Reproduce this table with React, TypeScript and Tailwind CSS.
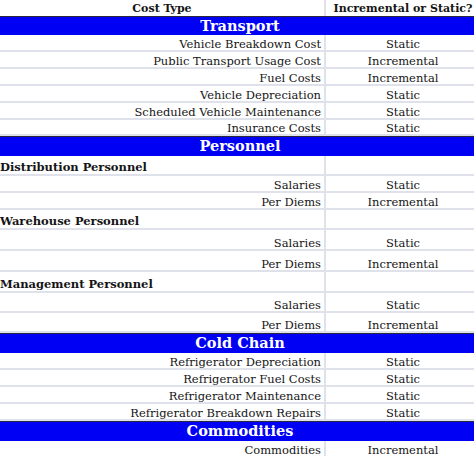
import React from "react";

type Row =
  | { k: "head"; h: number }
  | { k: "band"; label: string; h: number }
  | { k: "group"; label: string; h: number }
  | { k: "item"; left: string; right: string; h: number };

const rows: Row[] = [
  { k: "head", h: 16 },
  { k: "band", label: "Transport", h: 19 },
  { k: "item", left: "Vehicle Breakdown Cost", right: "Static", h: 17 },
  { k: "item", left: "Public Transport Usage Cost", right: "Incremental", h: 17 },
  { k: "item", left: "Fuel Costs", right: "Incremental", h: 17 },
  { k: "item", left: "Vehicle Depreciation", right: "Static", h: 17 },
  { k: "item", left: "Scheduled Vehicle Maintenance", right: "Static", h: 17 },
  { k: "item", left: "Insurance Costs", right: "Static", h: 16 },
  { k: "band", label: "Personnel", h: 20 },
  { k: "group", label: "Distribution Personnel", h: 20 },
  { k: "item", left: "Salaries", right: "Static", h: 17 },
  { k: "item", left: "Per Diems", right: "Incremental", h: 17 },
  { k: "group", label: "Warehouse Personnel", h: 20 },
  { k: "item", left: "Salaries", right: "Static", h: 21 },
  { k: "item", left: "Per Diems", right: "Incremental", h: 21 },
  { k: "group", label: "Management Personnel", h: 21 },
  { k: "item", left: "Salaries", right: "Static", h: 20 },
  { k: "item", left: "Per Diems", right: "Incremental", h: 20 },
  { k: "band", label: "Cold Chain", h: 20 },
  { k: "item", left: "Refrigerator Depreciation", right: "Static", h: 17 },
  { k: "item", left: "Refrigerator Fuel Costs", right: "Static", h: 17 },
  { k: "item", left: "Refrigerator Maintenance", right: "Static", h: 17 },
  { k: "item", left: "Refrigerator Breakdown Repairs", right: "Static", h: 17 },
  { k: "band", label: "Commodities", h: 20 },
  { k: "item", left: "Commodities", right: "Incremental", h: 17 },
];

export default function App() {
  return (
    <div
      className="w-[474px] h-[456px] overflow-hidden bg-white text-[#151515]"
      style={{ fontFamily: '"DejaVu Serif", serif' }}
    >
      <div className="w-[480px] flex flex-col">
        {rows.map((r, i) => {
          if (r.k === "head") {
            return (
              <div key={i} className="flex font-bold text-[11px] leading-none" style={{ height: r.h }}>
                <div className="w-[326px] flex items-center justify-center pt-[1px] border-r-2 border-[#dfe2ea]">
                  Cost Type
                </div>
                <div className="flex-1 flex items-center justify-center pt-[1px] whitespace-nowrap">
                  Incremental or Static?
                </div>
              </div>
            );
          }
          if (r.k === "band") {
            return (
              <div
                key={i}
                className="flex items-center justify-center bg-[#0000f5] text-white font-bold text-[14.5px] leading-none border-t border-[#2a2a3a]"
                style={{ height: r.h }}
              >
                {r.label}
              </div>
            );
          }
          if (r.k === "group") {
            return (
              <div key={i} className="flex text-[11.5px] leading-none border-b-2 border-[#dfe2ea]" style={{ height: r.h }}>
                <div className="w-[326px] flex items-end pb-[1px] font-bold whitespace-nowrap border-r-2 border-[#dfe2ea]">
                  {r.label}
                </div>
                <div className="flex-1" />
              </div>
            );
          }
          return (
            <div key={i} className="flex text-[11.5px] leading-none border-b-2 border-[#dfe2ea]" style={{ height: r.h }}>
              <div className="w-[326px] flex items-end justify-end pb-0 pr-[3px] whitespace-nowrap border-r-2 border-[#dfe2ea]">
                {r.left}
              </div>
              <div className="flex-1 flex items-end justify-center pb-0 whitespace-nowrap">{r.right}</div>
            </div>
          );
        })}
      </div>
    </div>
  );
}
